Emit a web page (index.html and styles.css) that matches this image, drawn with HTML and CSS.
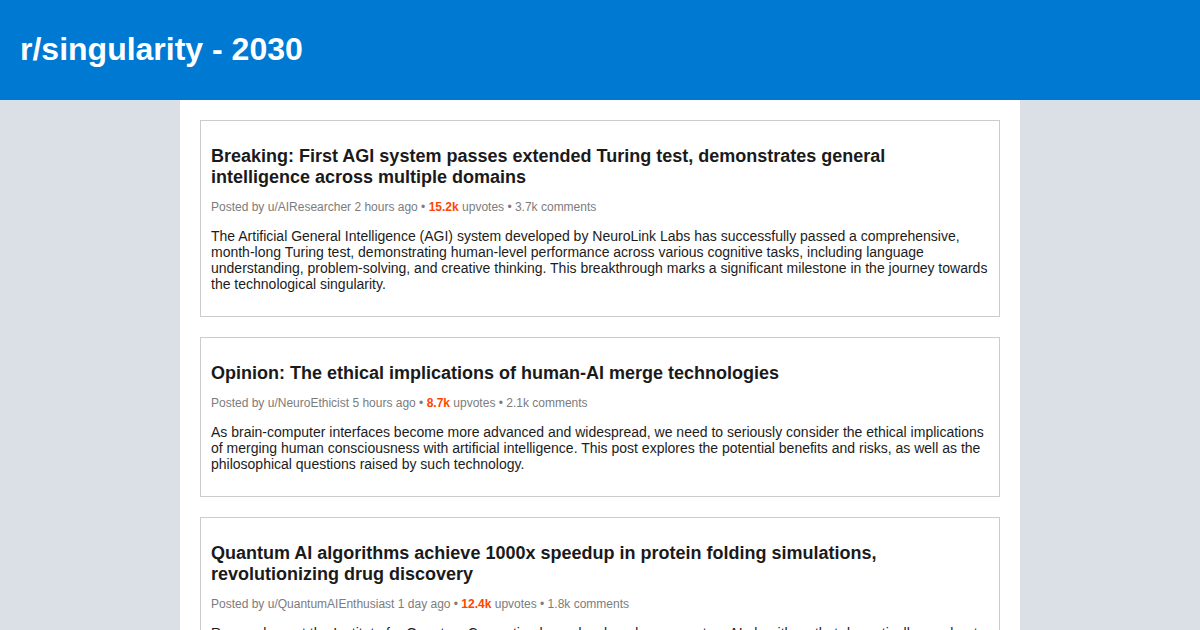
FILE: index.html
```html
<!DOCTYPE html>
<html lang="en">
<head>
<meta charset="utf-8">
<title>r/singularity - 2030</title>
<link rel="stylesheet" href="styles.css">
</head>
<body>
<header class="site-header">
  <h1 class="site-title">r/singularity - 2030</h1>
</header>
<main class="feed">
  <article class="post">
    <h2 class="post-title">Breaking: First AGI system passes extended Turing test, demonstrates general intelligence across multiple domains</h2>
    <p class="post-meta">Posted by u/AIResearcher 2 hours ago • <span class="votes">15.2k</span> upvotes • 3.7k comments</p>
    <p class="post-body">The Artificial General Intelligence (AGI) system developed by NeuroLink Labs has successfully passed a comprehensive, month-long Turing test, demonstrating human-level performance across various cognitive tasks, including language understanding, problem-solving, and creative thinking. This breakthrough marks a significant milestone in the journey towards the technological singularity.</p>
  </article>
  <article class="post">
    <h2 class="post-title">Opinion: The ethical implications of human-AI merge technologies</h2>
    <p class="post-meta">Posted by u/NeuroEthicist 5 hours ago • <span class="votes">8.7k</span> upvotes • 2.1k comments</p>
    <p class="post-body">As brain-computer interfaces become more advanced and widespread, we need to seriously consider the ethical implications of merging human consciousness with artificial intelligence. This post explores the potential benefits and risks, as well as the philosophical questions raised by such technology.</p>
  </article>
  <article class="post">
    <h2 class="post-title">Quantum AI algorithms achieve 1000x speedup in protein folding simulations, revolutionizing drug discovery</h2>
    <p class="post-meta">Posted by u/QuantumAIEnthusiast 1 day ago • <span class="votes">12.4k</span> upvotes • 1.8k comments</p>
    <p class="post-body">Researchers at the Institute for Quantum Computing have developed new quantum AI algorithms that dramatically accelerate protein folding simulations, enabling researchers to model complex molecular interactions in a fraction of the time previously required. This could revolutionize drug discovery and personalized medicine.</p>
  </article>
</main>
</body>
</html>
```
FILE: styles.css
```css
html, body {
  margin: 0;
  padding: 0;
}
body {
  background: #dae0e6;
  font-family: "Liberation Sans", Arial, sans-serif;
  color: #1a1a1b;
}
.site-header {
  background: #0079d3;
  padding: 10px 20px;
}
.site-title {
  margin: 0.67em 0;
  font-size: 32px;
  font-weight: bold;
  color: #ffffff;
}
.feed {
  width: 800px;
  margin: 0 auto;
  background: #ffffff;
  padding: 20px;
}
.post {
  border: 1px solid #ccc;
  padding: 10px;
  margin-bottom: 20px;
}
.post-title {
  font-size: 18px;
  margin: 15px 0 12px;
  color: #1a1a1b;
}
.post-meta {
  font-size: 12px;
  color: #7c7c7c;
  margin: 12px 0 14px;
}
.votes {
  color: #ff4500;
  font-weight: bold;
}
.post-body {
  font-size: 14px;
  line-height: 16px;
  margin: 14px 0;
  color: #1c1c1c;
}
```
